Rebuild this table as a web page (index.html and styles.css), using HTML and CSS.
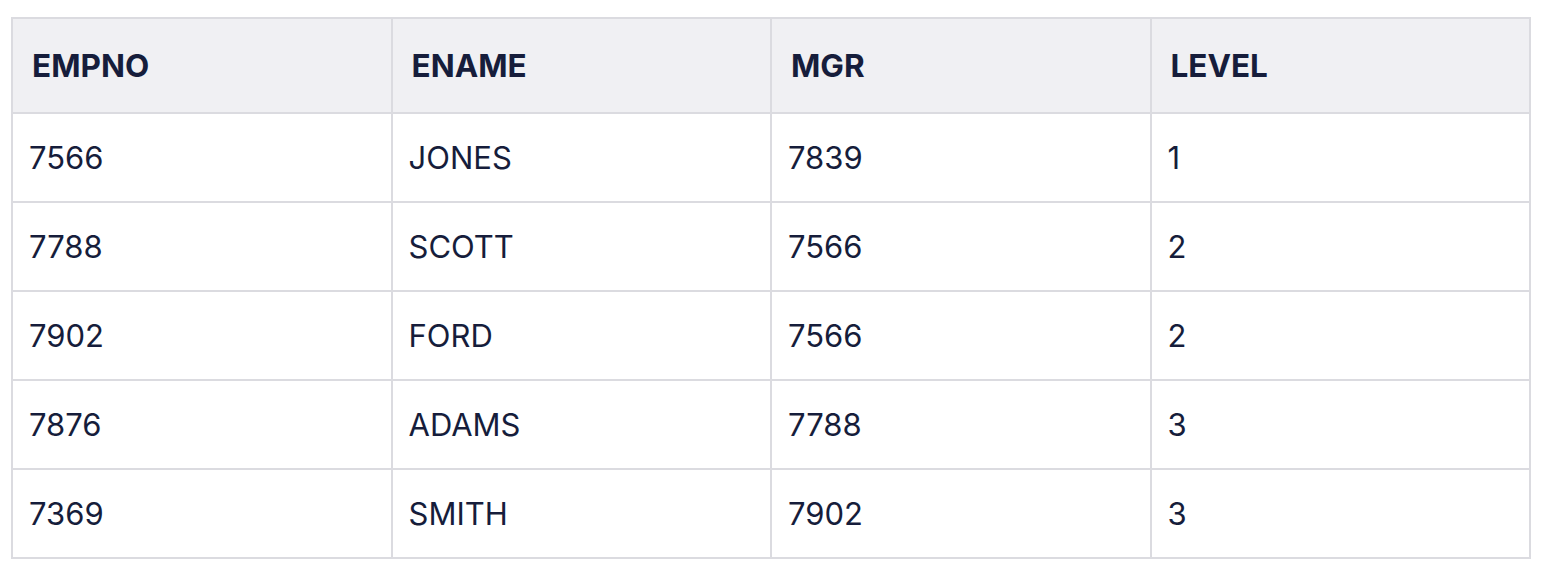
FILE: index.html
```html
<!DOCTYPE html>
<html>
<head>
<meta charset="utf-8">
<link rel="stylesheet" href="styles.css">
</head>
<body>
<table class="grid">
  <thead>
    <tr><th>EMPNO</th><th>ENAME</th><th>MGR</th><th>LEVEL</th></tr>
  </thead>
  <tbody>
    <tr><td>7566</td><td>JONES</td><td>7839</td><td>1</td></tr>
    <tr><td>7788</td><td>SCOTT</td><td>7566</td><td>2</td></tr>
    <tr><td>7902</td><td>FORD</td><td>7566</td><td>2</td></tr>
    <tr><td>7876</td><td>ADAMS</td><td>7788</td><td>3</td></tr>
    <tr><td>7369</td><td>SMITH</td><td>7902</td><td>3</td></tr>
  </tbody>
</table>
</body>
</html>
```
FILE: styles.css
```css
html, body {
  margin: 0;
  padding: 0;
  background: #ffffff;
}
body {
  padding: 17px 0 0 11px;
  font-family: Inter, "Noto Sans", sans-serif;
  color: #161d3b;
}
.grid {
  border-collapse: collapse;
  width: 1520px;
  table-layout: fixed;
  border: 2px solid #dbdbe0;
}
.grid th, .grid td {
  border: 2px solid #dbdbe0;
  text-align: left;
  padding: 0 19px;
  font-size: 31px;
  line-height: 36px;
}
.grid th {
  background: #f0f0f3;
  font-weight: 700;
  font-size: 31.5px;
  height: 93px;
}
.grid td {
  font-weight: 400;
  height: 87px;
  padding-left: 16px;
}
```
